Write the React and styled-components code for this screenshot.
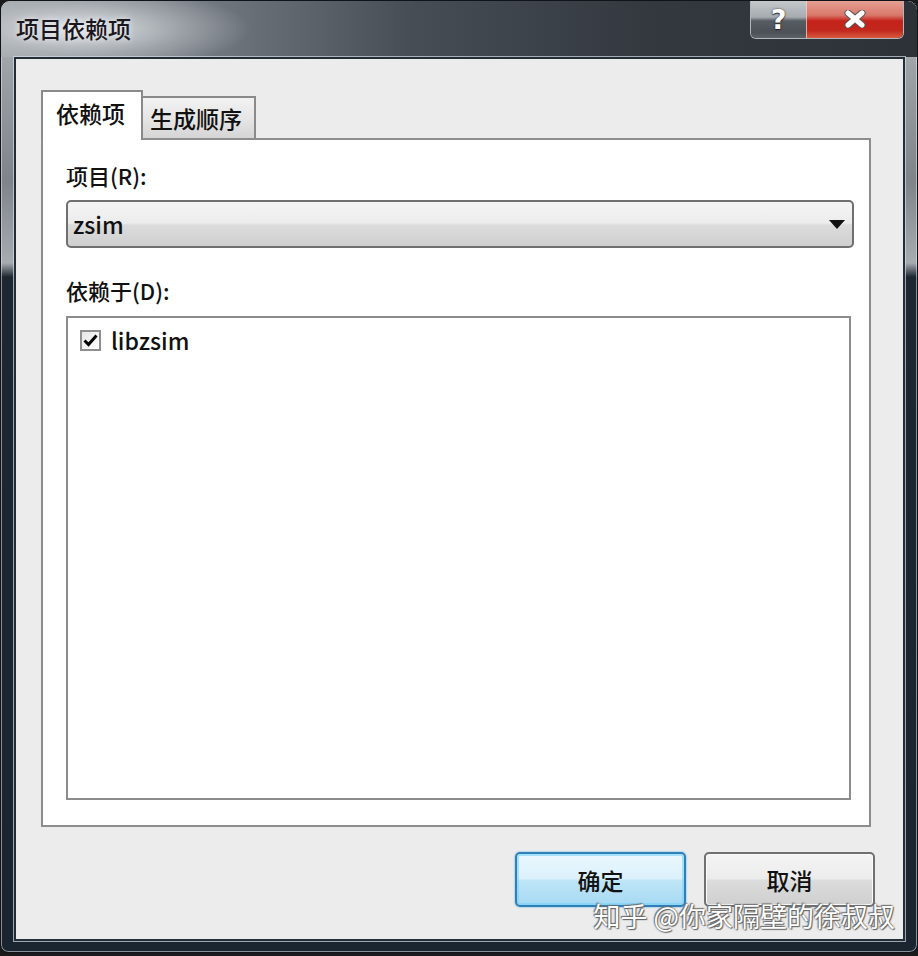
import styled, { createGlobalStyle } from "styled-components";

const GlobalStyle = createGlobalStyle`
  html, body {
    margin: 0;
    padding: 0;
    background: #1a1a1a;
  }
  body {
    font-family: "Noto Sans CJK SC", "Open Sans", sans-serif;
  }
`;

const Window = styled.div`
  position: relative;
  width: 918px;
  height: 953px;
  box-sizing: border-box;
  border: 1px solid #101418;
  border-radius: 10px 10px 8px 8px;
  box-shadow: inset 0 0 0 1px rgba(225, 230, 235, 0.55);
  background: linear-gradient(
    180deg,
    #b8bcc0 0px,
    #9ca1a6 70px,
    #7e848a 180px,
    #a7acb1 262px,
    #1d2731 276px,
    #1b2530 100%
  );
  display: flex;
  flex-direction: column;
  overflow: hidden;
`;

const TitleBar = styled.div`
  height: 56px;
  flex-shrink: 0;
  display: flex;
  align-items: flex-start;
  justify-content: space-between;
  padding: 0 13px 0 15px;
  background:
    radial-gradient(ellipse 170px 42px at 80px 28px, rgba(226, 229, 233, 0.95), rgba(190, 195, 200, 0.5) 60%, transparent 100%),
    linear-gradient(90deg, #a2a7ac 0%, #737980 22%, #474d54 45%, #33393f 70%, #2c3238 100%);
  border-radius: 9px 9px 0 0;
`;

const TitleText = styled.div`
  margin-top: 12px;
  font-size: 23px;
  font-weight: 500;
  line-height: 30px;
  color: #1a1620;
  text-shadow: 0 0 6px rgba(255, 255, 255, 0.8);
`;

const CaptionGroup = styled.div`
  display: flex;
  height: 38px;
  margin-top: -1px;
  border: 1px solid rgba(210, 215, 220, 0.8);
  border-top: none;
  border-radius: 0 0 6px 6px;
  overflow: hidden;
`;

const CaptionButton = styled.div`
  width: ${(p) => p.$width}px;
  display: flex;
  align-items: center;
  justify-content: center;
  color: #fff;
  font-family: "DejaVu Sans", sans-serif;
  font-weight: bold;
  font-size: 27px;
  text-shadow: 0 0 2px #333, 0 1px 1px #222;
  background: ${(p) =>
    p.$close
      ? "linear-gradient(180deg, #e5a396 0%, #d9786a 40%, #c4221a 55%, #c2281c 80%, #d85a40 100%)"
      : "linear-gradient(180deg, #c6cacd 0%, #a6abb0 45%, #565c62 55%, #4b5157 85%, #5d6369 100%)"};
  & + & {
    border-left: 1px solid rgba(230, 230, 230, 0.7);
  }
`;

const Body = styled.div`
  flex: 1;
  display: flex;
  padding: 0 12px 11px 13px;
`;

const Client = styled.div`
  flex: 1;
  display: flex;
  flex-direction: column;
  background: #ececec;
  border: 2px solid #232d37;
  box-shadow: 0 0 0 1px rgba(215, 220, 226, 0.7);
  padding: 31px 32px 0 25px;
`;

const TabStrip = styled.div`
  display: flex;
  align-items: flex-end;
  height: 48px;
`;

const Tab = styled.div`
  position: relative;
  z-index: ${(p) => (p.$active ? 2 : 1)};
  box-sizing: border-box;
  width: ${(p) => (p.$active ? 102 : 113)}px;
  height: ${(p) => (p.$active ? 50 : 42)}px;
  margin-bottom: ${(p) => (p.$active ? -2 : 0)}px;
  border: 2px solid #8a8a8a;
  border-bottom: none;
  ${(p) => (!p.$active ? "border-left: none;" : "")}
  background: ${(p) =>
    p.$active ? "#fff" : "linear-gradient(180deg, #f2f2f2 0%, #e6e6e6 50%, #d5d5d5 100%)"};
  font-size: 23px;
  font-weight: 500;
  line-height: 30px;
  color: #111;
  padding: ${(p) => (p.$active ? "6px 0 0 13px" : "5px 0 0 7px")};
`;

const Panel = styled.div`
  height: 689px;
  box-sizing: border-box;
  display: flex;
  flex-direction: column;
  background: #fff;
  border: 2px solid #8d8d8d;
  padding: 20px 18px 25px 23px;
`;

const Label = styled.div`
  font-size: 22px;
  font-weight: 500;
  line-height: 30px;
  color: #111;
  margin-top: ${(p) => p.$gap || 0}px;
`;

const Combo = styled.div`
  margin-top: 10px;
  margin-right: -3px;
  height: 48px;
  box-sizing: border-box;
  display: flex;
  align-items: center;
  justify-content: space-between;
  padding: 0 7px 0 5px;
  border: 2px solid #6f6f6f;
  border-radius: 5px;
  background: linear-gradient(180deg, #f4f4f4 0%, #ececec 48%, #dcdcdc 52%, #cfcfcf 100%);
  font-size: 23px;
  font-weight: 500;
  color: #111;
`;

const ListBox = styled.div`
  flex: 1;
  margin-top: 11px;
  border: 2px solid #8c8c8c;
  background: #fff;
  padding: 11px 12px;
`;

const ListRow = styled.label`
  display: flex;
  align-items: center;
  gap: 10px;
  height: 22px;
  font-size: 23px;
  font-weight: 500;
  color: #111;
`;

const CheckBox = styled.span`
  width: 21px;
  height: 21px;
  box-sizing: border-box;
  border: 2px solid #8e8f8f;
  background: linear-gradient(135deg, #e6e6e6, #ffffff);
  display: flex;
  align-items: center;
  justify-content: center;
`;

const ButtonRow = styled.div`
  display: flex;
  justify-content: flex-end;
  gap: 18px;
  margin-top: 25px;
  margin-right: -4px;
`;

const DialogButton = styled.div`
  width: 171px;
  height: 55px;
  box-sizing: border-box;
  display: flex;
  align-items: center;
  justify-content: center;
  font-size: 23px;
  font-weight: 500;
  color: #111;
  border-radius: 5px;
  border: 2px solid ${(p) => (p.$primary ? "#2f7fb8" : "#707070")};
  box-shadow: ${(p) => (p.$primary ? "0 0 2px #40a8e0, inset 0 0 0 2px rgba(120, 210, 250, 0.6)" : "inset 0 0 0 1px #fbfbfb")};
  background: ${(p) =>
    p.$primary
      ? "linear-gradient(180deg, #eaf7fd 0%, #dcf1fb 48%, #bfe5f7 52%, #a6d9f3 100%)"
      : "linear-gradient(180deg, #f4f4f4 0%, #ececec 48%, #dcdcdc 52%, #cfcfcf 100%)"};
`;

const Watermark = styled.div`
  position: absolute;
  right: 22px;
  bottom: 18px;
  font-size: 27px;
  line-height: 36px;
  color: #fff;
  text-shadow: 0 0 2px #555, 1px 1px 1px #666, -1px -1px 1px #777;
  white-space: pre;
`;

function CheckMark() {
  return (
    <svg width="15" height="13" viewBox="0 0 15 13">
      <path d="M1.5 6.5 L5.5 10.5 L13.5 1.5" fill="none" stroke="#000" strokeWidth="3" />
    </svg>
  );
}

function DropArrow() {
  return (
    <svg width="16" height="9" viewBox="0 0 16 9">
      <path d="M0 0 H16 L8 9 Z" fill="#111" />
    </svg>
  );
}

function CloseGlyph() {
  return (
    <svg width="24" height="18" viewBox="0 0 24 18">
      <path d="M5 3 L19 15 M19 3 L5 15" stroke="#555" strokeWidth="7" strokeLinecap="round" />
      <path d="M5 3 L19 15 M19 3 L5 15" stroke="#fff" strokeWidth="5" strokeLinecap="round" />
    </svg>
  );
}

export default function App() {
  return (
    <>
      <GlobalStyle />
      <Window>
        <TitleBar>
          <TitleText>项目依赖项</TitleText>
          <CaptionGroup>
            <CaptionButton $width={55}>?</CaptionButton>
            <CaptionButton $width={96} $close>
              <CloseGlyph />
            </CaptionButton>
          </CaptionGroup>
        </TitleBar>
        <Body>
          <Client>
            <TabStrip>
              <Tab $active>依赖项</Tab>
              <Tab>生成顺序</Tab>
            </TabStrip>
            <Panel>
              <Label>项目(R):</Label>
              <Combo>
                <span>zsim</span>
                <DropArrow />
              </Combo>
              <Label $gap={27}>依赖于(D):</Label>
              <ListBox>
                <ListRow>
                  <CheckBox>
                    <CheckMark />
                  </CheckBox>
                  libzsim
                </ListRow>
              </ListBox>
            </Panel>
            <ButtonRow>
              <DialogButton $primary>确定</DialogButton>
              <DialogButton>取消</DialogButton>
            </ButtonRow>
          </Client>
        </Body>
        <Watermark>知乎 @你家隔壁的徐叔叔</Watermark>
      </Window>
    </>
  );
}
